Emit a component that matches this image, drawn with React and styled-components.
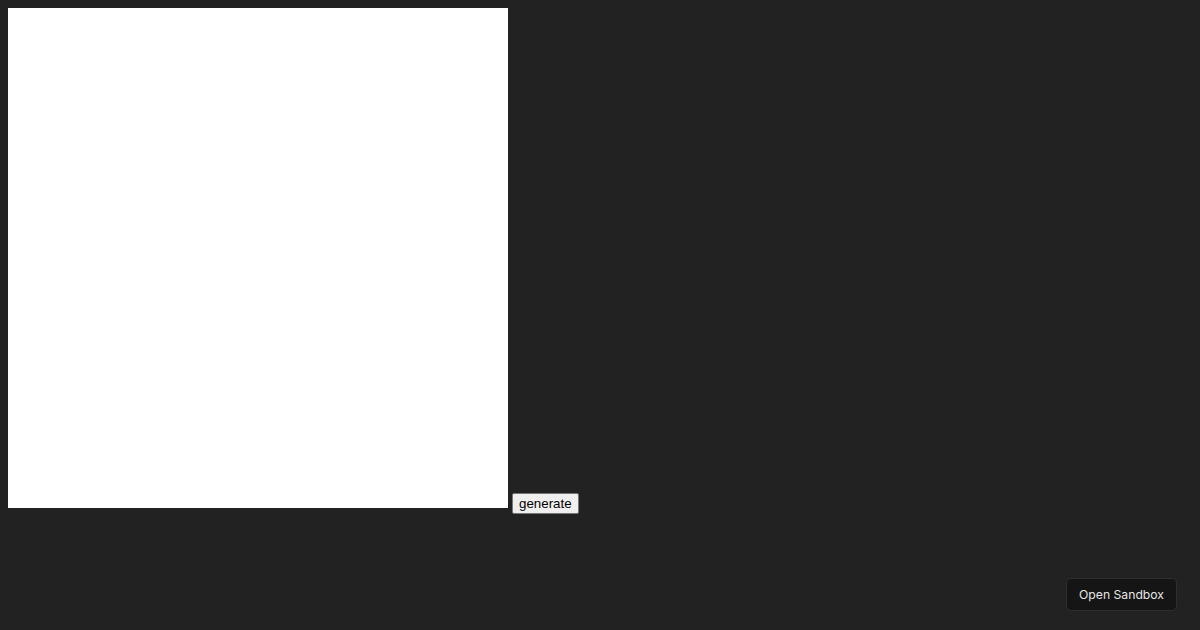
import React, { useEffect, useRef } from 'react';
import styled, { createGlobalStyle } from 'styled-components';

const GlobalStyle = createGlobalStyle`
  html, body {
    background: #222222;
  }
  body {
    margin: 8px;
    font-family: "Liberation Sans", Arial, sans-serif;
  }
`;

const Canvas = styled.canvas`
  background: #ffffff;
  width: 500px;
  height: 500px;
`;

const GenerateButton = styled.button`
  font-family: "Liberation Sans", Arial, sans-serif;
  font-size: 13.33px;
  margin-left: 4px;
  padding: 2px 6px;
  color: #000;
  background: #efefef;
  border: 1px solid #767676;
  border-radius: 2px;
`;

const SandboxLink = styled.a`
  position: fixed;
  right: 23px;
  bottom: 19px;
  display: flex;
  align-items: center;
  height: 33px;
  padding: 0 12px;
  box-sizing: border-box;
  background: #151515;
  border: 1px solid #2f2f2f;
  border-radius: 5px;
  color: #e6e6e6;
  font-family: Inter, "Noto Sans", sans-serif;
  font-size: 12.2px;
  text-decoration: none;
`;

export default function App() {
  const ref = useRef(null);

  useEffect(() => {
    const ctx = ref.current.getContext('2d');
    ctx.fillStyle = '#ffffff';
    ctx.fillRect(0, 0, 500, 500);
  }, []);

  return (
    <>
      <GlobalStyle />
      <Canvas ref={ref} width={500} height={500} />
      <GenerateButton>generate</GenerateButton>
      <SandboxLink href="#">Open Sandbox</SandboxLink>
    </>
  );
}
